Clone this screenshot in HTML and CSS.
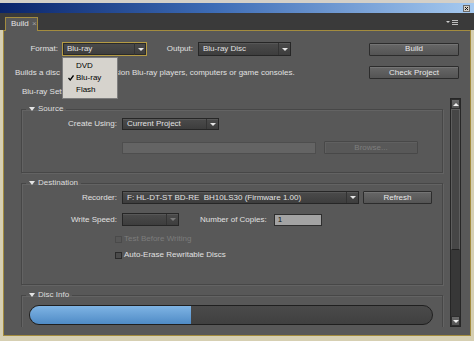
FILE: index.html
```html
<!doctype html>
<html>

<head>
    <meta charset="utf-8">
    <title>Build</title>
    <link rel="stylesheet" href="styles.css">
</head>

<body>
    <div class="titlebar">
        <svg class="close" width="7" height="7" viewBox="0 0 7 7">
            <rect x="0.5" y="0.5" width="6" height="6" fill="#d4d0c8" stroke="#6a6a6a" />
            <path d="M2 2 L5 5 M5 2 L2 5" stroke="#111" stroke-width="1" />
        </svg>
    </div>
    <div class="tabbar">
        <div class="tab">Build <span class="tab-x">×</span></div>
        <svg class="panel-menu" width="12" height="7" viewBox="0 0 12 7">
            <path d="M0 2 L4 2 L2 4 Z" fill="#cfcfcf" />
            <path d="M6 1.5 H12 M6 3.5 H12 M6 5.5 H12" stroke="#bdbdbd" stroke-width="1" />
        </svg>
    </div>
    <div class="panel">
        <div class="row row-format">
            <label class="lbl lbl-format">Format:</label>
            <div class="select-wrap">
                <div class="select select-format">Blu-ray<span class="arrow"></span></div>
                <ul class="menu">
                    <li><span class="check"></span>DVD</li>
                    <li><span class="check"><svg width="6" height="6" viewBox="0 0 6 6"><path d="M0.5 3 L2.2 5 L5.5 0.5" fill="none" stroke="#000" stroke-width="1.3" /></svg></span>Blu-ray</li>
                    <li><span class="check"></span>Flash</li>
                </ul>
            </div>
            <label class="lbl lbl-output">Output:</label>
            <div class="select select-output">Blu-ray Disc<span class="arrow"></span></div>
            <button class="btn btn-main">Build</button>
        </div>
        <div class="row row-desc">
            <p class="desc">Builds a disc that suits television Blu-ray players, computers or game consoles.</p>
            <button class="btn btn-main">Check Project</button>
        </div>
        <div class="settings-title">Blu-ray Settings</div>
        <div class="scroll">
            <div class="scroll-content">
                <fieldset class="group group-source">
                    <legend><i class="twisty"></i>Source</legend>
                    <div class="field">
                        <label class="flabel">Create Using:</label>
                        <div class="select select-using">Current Project<span class="arrow"></span></div>
                    </div>
                    <div class="field field-path">
                        <div class="path"></div>
                        <button class="btn btn-browse" disabled>Browse...</button>
                    </div>
                </fieldset>
                <fieldset class="group group-dest">
                    <legend><i class="twisty"></i>Destination</legend>
                    <div class="field field-rec">
                        <label class="flabel">Recorder:</label>
                        <div class="select select-rec">F: HL-DT-ST BD-RE&nbsp; BH10LS30 (Firmware 1.00)<span class="arrow"></span></div>
                        <button class="btn btn-refresh">Refresh</button>
                    </div>
                    <div class="field field-speed">
                        <label class="flabel">Write Speed:</label>
                        <div class="select select-speed disabled"><span class="arrow"></span></div>
                        <label class="copies-lbl">Number of Copies:</label>
                        <div class="copies">1</div>
                    </div>
                    <div class="check-row check-test disabled"><span class="box"></span>Test Before Writing</div>
                    <div class="check-row check-auto"><span class="box"></span>Auto-Erase Rewritable Discs</div>
                </fieldset>
                <fieldset class="group group-disc">
                    <legend><i class="twisty"></i>Disc Info</legend>
                    <div class="progress">
                        <div class="progress-fill" style="width: 161px;"></div>
                    </div>
                </fieldset>
            </div>
            <div class="scrollbar">
                <div class="sb-btn sb-up"></div>
                <div class="sb-thumb"></div>
                <div class="sb-track"></div>
                <div class="sb-btn sb-down"></div>
            </div>
        </div>
    </div>
</body>

</html>
```

FILE: styles.css
```css
* {
    box-sizing: border-box;
}
body {
    margin: 0;
    width: 474px;
    height: 341px;
    overflow: hidden;
    background: #d6cfb2;
    font-family: "Liberation Sans", Arial, sans-serif;
    font-size: 8px;
    line-height: 10px;
    color: #e0e0e0;
}
.titlebar {
    height: 13px;
    border-top: 3px solid #d4d0c8;
    background: linear-gradient(90deg, #0a246a 0%, #3d6cb6 45%, #a6caf0 100%);
    display: flex;
    justify-content: flex-end;
    align-items: center;
    padding-right: 4px;
}
.close {
    display: block;
}
.tabbar {
    height: 17px;
    background: #3a3a3a;
    display: flex;
    align-items: flex-end;
    padding-left: 5px;
}
.tab {
    position: relative;
    z-index: 1;
    width: 33px;
    height: 14px;
    margin-bottom: -1px;
    padding: 1px 0 0 5px;
    background: #585858;
    border: 1px solid #a38c3f;
    border-bottom: none;
    color: #e4e4e4;
    white-space: nowrap;
}
.tab-x {
    color: #a0a0a0;
    margin-left: 1px;
}
.panel-menu {
    margin-left: auto;
    margin-right: 16px;
    align-self: center;
    margin-top: 2px;
}
.panel {
    margin: 0 3px;
    height: 306px;
    border: 1px solid #a38c3f;
    background: #585858;
    display: flex;
    flex-direction: column;
}
.row {
    display: flex;
    align-items: center;
}
.row-format {
    height: 14px;
    margin-top: 11px;
}
.lbl {
    text-align: right;
}
.lbl-format {
    width: 54px;
    margin-right: 4px;
}
.lbl-output {
    width: 46px;
    margin-right: 5px;
}
.select-wrap {
    position: relative;
}
.select {
    display: flex;
    align-items: center;
    height: 13px;
    padding-left: 4px;
    background: linear-gradient(#4b4b4b, #3d3d3d);
    border: 1px solid #262626;
    box-shadow: inset 0 1px 0 #575757;
    color: #e2e2e2;
    white-space: nowrap;
    overflow: hidden;
}
.arrow {
    margin-left: auto;
    width: 12px;
    align-self: stretch;
    border-left: 1px solid #333;
    display: flex;
    align-items: center;
    justify-content: center;
    flex-shrink: 0;
}
.arrow::after {
    content: "";
    border-left: 3px solid transparent;
    border-right: 3px solid transparent;
    border-top: 3px solid #e6e6e6;
}
.select-format {
    width: 85px;
    height: 14px;
    border-color: #b59b44;
    box-shadow: inset 0 0 0 1px #2a2a2a;
}
.select-output {
    width: 93px;
    height: 14px;
}
.menu {
    position: absolute;
    z-index: 2;
    top: 100%;
    left: 0;
    width: 56px;
    margin: 1px 0 0;
    padding: 2px 0;
    list-style: none;
    background: #d6d3cd;
    border: 1px solid #7d7d7d;
    color: #000;
}
.menu li {
    display: flex;
    align-items: center;
    height: 12px;
    padding-left: 5px;
}
.check {
    width: 8px;
    display: flex;
    align-items: center;
}
.check svg {
    display: block;
}
.btn {
    height: 13px;
    padding: 0;
    font-family: inherit;
    font-size: 8px;
    line-height: 10px;
    color: #e8e8e8;
    background: linear-gradient(#676767, #545454);
    border: 1px solid #2c2c2c;
    border-radius: 1px;
    box-shadow: inset 0 1px 0 #747474;
}
.btn-main {
    margin-left: auto;
    width: 90px;
    margin-right: 11px;
}
.row-desc {
    margin-top: 10px;
}
.desc {
    margin: 0;
    padding-left: 11px;
    white-space: nowrap;
}
.settings-title {
    margin-top: 8px;
    padding-left: 18px;
    height: 10px;
}
.scroll {
    margin-top: 1px;
    height: 229px;
    display: flex;
}
.scroll-content {
    flex: 1;
    overflow: hidden;
}
.group {
    margin: 0 7px 0 17px;
    padding: 0;
    min-width: 0;
    border: 1px solid #474747;
    box-shadow: 1px 1px 0 #636363, inset 1px 1px 0 #636363;
}
.group legend {
    margin-left: 4px;
    padding: 0 3px;
    height: 10px;
    display: flex;
    align-items: center;
    color: #dcdcdc;
}
.twisty {
    display: inline-block;
    width: 0;
    height: 0;
    border-left: 3px solid transparent;
    border-right: 3px solid transparent;
    border-top: 4px solid #e4e4e4;
    margin-right: 3px;
}
.group-source {
    margin-top: 6px;
    padding-bottom: 18px;
}
.field {
    display: flex;
    align-items: center;
}
.flabel {
    width: 95px;
    margin-right: 5px;
    text-align: right;
    flex-shrink: 0;
}
.group-source .field {
    margin-top: 4px;
}
.select-using {
    width: 97px;
    height: 12px;
}
.group-source .field-path {
    margin-top: 11px;
    padding-left: 100px;
}
.path {
    width: 194px;
    height: 12px;
    background: #646464;
    border: 1px solid #4e4e4e;
}
.btn-browse {
    width: 94px;
    height: 13px;
    margin-left: 8px;
    background: #585858;
    border-color: #484848;
    box-shadow: inset 1px 1px 0 #606060;
    color: #7e7e7e;
}
.group-dest {
    margin-top: 5px;
    padding-bottom: 24px;
}
.field-rec {
    margin-top: 3px;
}
.select-rec {
    width: 237px;
}
.btn-refresh {
    width: 69px;
    margin-left: 4px;
}
.field-speed {
    margin-top: 9px;
}
.select-speed {
    width: 57px;
}
.select-speed .arrow::after {
    border-top-color: #7a7a7a;
}
.copies-lbl {
    margin-left: 21px;
    white-space: nowrap;
}
.copies {
    width: 48px;
    height: 12px;
    margin-left: 7px;
    padding-left: 3px;
    background: #a3a3a3;
    border: 1px solid #2e2e2e;
    color: #111;
    line-height: 10px;
}
.check-row {
    display: flex;
    align-items: center;
    height: 10px;
    padding-left: 93px;
}
.box {
    width: 7px;
    height: 7px;
    margin-right: 2px;
    background: #4b4b4b;
    border: 1px solid #2a2a2a;
}
.check-test {
    margin-top: 8px;
    color: #7c7c7c;
}
.check-test .box {
    background: #575757;
    border-color: #4a4a4a;
}
.check-auto {
    margin-top: 6px;
}
.group-disc {
    margin-top: 5px;
    padding-bottom: 10px;
}
.progress {
    margin: 5px 0 0 7px;
    width: 404px;
    height: 20px;
    border: 1px solid #1f1f1f;
    border-radius: 10px;
    background: linear-gradient(#4a4a4a, #404040);
    overflow: hidden;
}
.progress-fill {
    height: 100%;
    background: linear-gradient(#7fb4e4, #4f8bc6);
}
.scrollbar {
    width: 11px;
    margin-right: 9px;
    display: flex;
    flex-direction: column;
    background: #373737;
    border: 1px solid #262626;
}
.sb-btn {
    height: 10px;
    display: flex;
    align-items: center;
    justify-content: center;
    background: linear-gradient(#6a6a6a, #555);
    border: 1px solid #2e2e2e;
}
.sb-up::after {
    content: "";
    border-left: 3px solid transparent;
    border-right: 3px solid transparent;
    border-bottom: 3px solid #f0f0f0;
}
.sb-down::after {
    content: "";
    border-left: 3px solid transparent;
    border-right: 3px solid transparent;
    border-top: 3px solid #f0f0f0;
}
.sb-thumb {
    height: 141px;
    background: #464646;
    border: 1px solid #5e5e5e;
    border-bottom-color: #222;
}
.sb-track {
    flex: 1;
}
```
